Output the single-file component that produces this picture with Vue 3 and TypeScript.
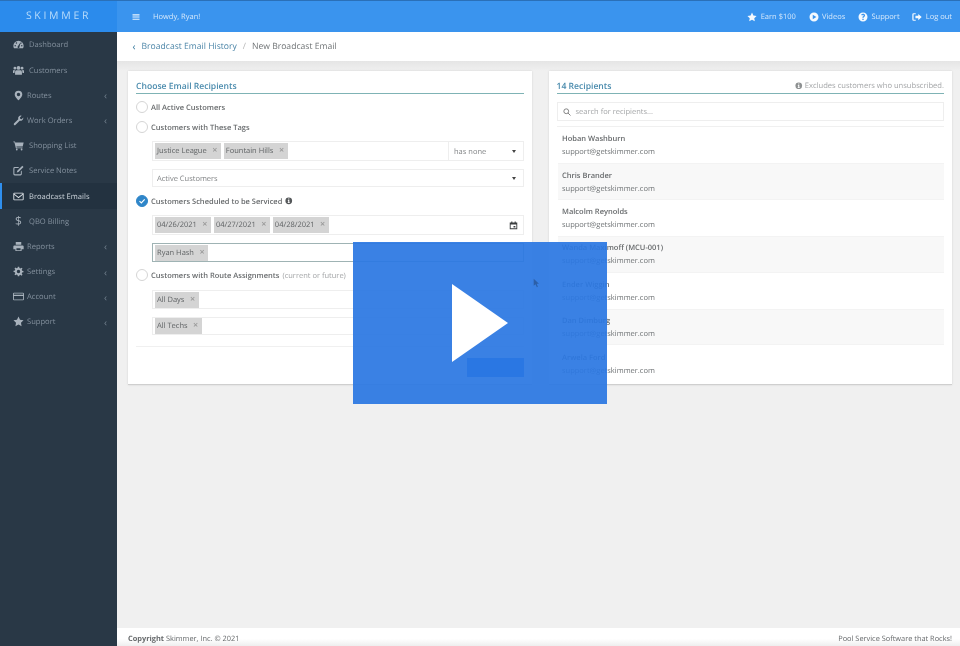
<script setup lang="ts">
const icons: Record<string, string> = {
  dashboard: 'M8 2.500A7.500 7.500 0 0 0 .5 10c0 1.400.4 2.600 1 3.500h13c.6-.9 1-2.100 1-3.500A7.500 7.500 0 0 0 8 2.500zM3.200 11a1.100 1.100 0 1 1 0-2.200 1.100 1.100 0 0 1 0 2.200zM5 7a1.100 1.100 0 1 1 0-2.200A1.100 1.100 0 0 1 5 7zm4.100 5.600a1.500 1.500 0 0 1-2.500-1.500L10.800 5l.5.200-1.800 5.600c.3.500 0 1.200-.4 1.800zM11.500 7a1.100 1.100 0 1 1 0-2.200 1.100 1.100 0 0 1 0 2.200zm1.300 4a1.100 1.100 0 1 1 0-2.200 1.100 1.100 0 0 1 0 2.200z',
  users: 'M8 1.500a2.700 2.700 0 1 1 0 5.400 2.700 2.700 0 0 1 0-5.400zM2.800 2.500a2.100 2.100 0 1 1 0 4.200 2.100 2.100 0 0 1 0-4.200zm10.400 0a2.100 2.100 0 1 1 0 4.200 2.100 2.100 0 0 1 0-4.200zM5.200 7.600h5.600c1.300 0 2.200 1.200 2.200 2.900V14H3v-3.500c0-1.700.9-2.900 2.200-2.900zM0 7.500h3.400c-.7.700-1.200 1.700-1.200 3v1H0zm12.600 0H16v4h-2.200v-1c0-1.300-.5-2.300-1.200-3z',
  pin: 'M8 1a5.500 5.500 0 0 0-5.500 5.500C2.500 10 8 15 8 15s5.500-5 5.500-8.500A5.500 5.500 0 0 0 8 1zm0 8a2.500 2.500 0 1 1 0-5 2.500 2.500 0 0 1 0 5z',
  wrench: 'M15 4.500a4 4 0 0 1-5.300 3.800L3.500 14.600a1.500 1.500 0 0 1-2.100-2.100l6.300-6.200A4 4 0 0 1 12.600 1L10 3.500l.5 2 2 .5L15 3.500z',
  cart: 'M.5 2h2.400l.4 1.500H15.500l-1.400 6H5l.3 1.300h8.700V12H4.200L2 3.200H.5zM5.500 12.500a1.300 1.300 0 1 1 0 2.600 1.300 1.300 0 0 1 0-2.600zm7 0a1.300 1.300 0 1 1 0 2.600 1.300 1.300 0 0 1 0-2.600z',
  edit: 'M2.500 3H9L7.600 4.400H2.700a.700.700 0 0 0-.7.700v7.800c0 .4.300.7.700.7h8c.4 0 .7-.3.700-.7V9.500l1.400-1.400v5c0 1.100-.9 2-2 2H2.500a2 2 0 0 1-2-2V5a2 2 0 0 1 2-2zM13.500 1l1.800 1.800L8 10.200 5.500 11l.7-2.600z',
  mail: 'M2 2.500h12A1.500 1.500 0 0 1 15.500 4v8a1.500 1.500 0 0 1-1.500 1.500H2A1.500 1.500 0 0 1 .5 12V4A1.500 1.500 0 0 1 2 2.500zm-.2 1.400L8 8.800l6.200-4.900-.2-.1H2zM1.800 5.600v6.400l.2.200h12l.2-.2V5.600L8 10.500z',
  print: 'M4 1.500h8v4H4zM2 6.500h12a1.500 1.500 0 0 1 1.500 1.500v4H12.500v2.500h-9V12H.5V8A1.500 1.500 0 0 1 2 6.500zm3 4v3h6v-3z',
  gear: 'M7 1h2l.4 2 1.300.5 1.700-1.100 1.400 1.400-1.100 1.700.5 1.300 2 .4v2l-2 .4-.5 1.300 1.100 1.700-1.400 1.400-1.700-1.100-1.300.5L9 15H7l-.4-2-1.300-.5-1.700 1.100-1.400-1.400 1.100-1.700-.5-1.300-2-.4V7l2-.4.5-1.300-1.100-1.700 1.400-1.400 1.700 1.100 1.300-.5zM8 5.500a2.500 2.500 0 1 0 0 5 2.500 2.500 0 0 0 0-5z',
  card: 'M1.500 2.500h13A1.500 1.500 0 0 1 16 4v8a1.500 1.500 0 0 1-1.500 1.500h-13A1.500 1.500 0 0 1 0 12V4a1.500 1.500 0 0 1 1.500-1.500zm-.2 1.300V5.500h13.400V3.800zm0 3.500v4.900h13.400V7.300z',
  star: 'M8 .8l2.200 4.700 5.100.7-3.700 3.600.9 5.100L8 12.500l-4.500 2.400.9-5.100L.7 6.200l5.100-.7z',
  bars: 'M1 2.500h14v2.300H1zM1 6.900h14v2.300H1zM1 11.300h14v2.300H1z',
  play: 'M8 .8a7.200 7.200 0 1 0 0 14.400A7.200 7.200 0 0 0 8 .8zM6 4.300L11.800 8 6 11.700z',
  help: 'M8 .8a7.200 7.200 0 1 0 0 14.400A7.200 7.200 0 0 0 8 .8zm1.100 12H6.900v-2h2.200zM9.200 9H6.900c0-2.200 2.300-2.300 2.300-3.500 0-.5-.5-.9-1.200-.9-.6 0-1.200.3-1.600.9L5 4.400c.6-1 1.700-1.600 3.100-1.600 1.800 0 3.200 1 3.200 2.600C11.300 7.400 9.200 7.500 9.200 9z',
  logout: 'M2.500 2H6v1.500H3a.500.500 0 0 0-.5.500v8c0 .3.200.5.500.5h3V14H2.500A2 2 0 0 1 .5 12V4a2 2 0 0 1 2-2zm7.500 1l5.500 5-5.500 5v-3H5.500V6H10z',
  info: 'M8 .8a7.200 7.200 0 1 0 0 14.400A7.200 7.200 0 0 0 8 .8zM6.800 3h2.400v2.200H6.800zM6 6.500h3.200V11H10.200v1.700H5.800V11h1.100V8.200H6z'
}

const navItems = [
  { label: 'Dashboard', icon: 'dashboard' },
  { label: 'Customers', icon: 'users' },
  { label: 'Routes', icon: 'pin', more: true },
  { label: 'Work Orders', icon: 'wrench', more: true },
  { label: 'Shopping List', icon: 'cart' },
  { label: 'Service Notes', icon: 'edit' },
  { label: 'Broadcast Emails', icon: 'mail', active: true },
  { label: 'QBO Billing', icon: '$' },
  { label: 'Reports', icon: 'print', more: true },
  { label: 'Settings', icon: 'gear', more: true },
  { label: 'Account', icon: 'card', more: true },
  { label: 'Support', icon: 'star', more: true }
]

const topLinks = [
  { label: 'Earn $100', icon: 'star' },
  { label: 'Videos', icon: 'play' },
  { label: 'Support', icon: 'help' },
  { label: 'Log out', icon: 'logout' }
]

const recipients = [
  'Hoban Washburn',
  'Chris Brander',
  'Malcolm Reynolds',
  'Wanda Maximoff (MCU-001)',
  'Ender Wiggin',
  'Dan Dimburg',
  'Arwela Ford'
]
</script>

<template>
  <div class="app">
    <aside class="sidebar">
      <div class="logo">SKIMMER</div>
      <nav>
        <a
          v-for="item in navItems"
          :key="item.label"
          class="nav-item"
          :class="{ active: item.active }"
        >
          <span v-if="item.icon === '$'" class="dollar">$</span>
          <svg v-else class="nav-icon" viewBox="0 0 16 16"><path :d="icons[item.icon]" fill-rule="evenodd" /></svg>
          <span class="nav-label" :class="{ tight: item.more }">{{ item.label }}</span>
          <span v-if="item.more" class="chev">‹</span>
        </a>
      </nav>
    </aside>

    <div class="main">
      <header class="topbar">
        <svg class="bars" viewBox="0 0 16 16"><path :d="icons.bars" /></svg>
        <span class="howdy">Howdy, Ryan!</span>
        <div class="top-links">
          <a v-for="link in topLinks" :key="link.label" class="top-link">
            <svg viewBox="0 0 16 16"><path :d="icons[link.icon]" fill-rule="evenodd" /></svg>
            {{ link.label }}
          </a>
        </div>
      </header>

      <div class="crumbs">
        <span class="back">‹</span>
        <a class="crumb-link">Broadcast Email History</a>
        <span class="slash">/</span>
        <span>New Broadcast Email</span>
      </div>

      <main class="content">
        <section class="panel">
          <h3 class="panel-title">Choose Email Recipients</h3>

          <label class="radio-row first"><i class="radio"></i>All Active Customers</label>
          <label class="radio-row"><i class="radio"></i>Customers with These Tags</label>
          <div class="field sub tags-field">
            <div class="tags">
              <span class="tag">Justice League <b>×</b></span>
              <span class="tag">Fountain Hills <b>×</b></span>
            </div>
            <div class="has-none">has none <i class="caret"></i></div>
          </div>
          <div class="field sub select-field">Active Customers <i class="caret"></i></div>

          <label class="radio-row checked">
            <i class="radio on">
              <svg viewBox="0 0 12 12"><path d="M3 6.200l2.200 2.200L9.200 4" /></svg>
            </i>
            Customers Scheduled to be Serviced
            <svg class="info dark" viewBox="0 0 16 16"><path :d="icons.info" fill-rule="evenodd" /></svg>
          </label>
          <div class="field sub date-field">
            <div class="tags">
              <span class="tag">04/26/2021 <b>×</b></span>
              <span class="tag">04/27/2021 <b>×</b></span>
              <span class="tag">04/28/2021 <b>×</b></span>
            </div>
            <svg class="cal" viewBox="0 0 12 12">
              <path d="M1 2h10v9H1zM2.200 4.600v5.200h7.600V4.600zM3 .8h1.500V2H3zM7.500.8H9V2H7.500zM6 6.500h2.500v2.300H6z" fill-rule="evenodd" />
            </svg>
          </div>
          <div class="field sub focus-field">
            <div class="tags"><span class="tag">Ryan Hash <b>×</b></span></div>
          </div>

          <label class="radio-row route">
            <i class="radio"></i>Customers with Route Assignments
            <em>(current or future)</em>
          </label>
          <div class="field sub days-field">
            <div class="tags"><span class="tag">All Days <b>×</b></span></div>
          </div>
          <div class="field sub techs-field">
            <div class="tags"><span class="tag">All Techs <b>×</b></span></div>
          </div>

          <div class="actions">
            <button class="send">Continue</button>
          </div>
        </section>

        <section class="panel right">
          <div class="panel-title split">
            <h3>14 Recipients</h3>
            <span class="note">
              <svg class="info" viewBox="0 0 16 16"><path :d="icons.info" fill-rule="evenodd" /></svg>
              Excludes customers who unsubscribed.
            </span>
          </div>
          <div class="search">
            <svg viewBox="0 0 16 16"><circle cx="6.500" cy="6.500" r="4.800" /><path d="M10 10l5 5" /></svg>
            search for recipients...
          </div>
          <ul class="recipients">
            <li v-for="name in recipients" :key="name">
              <strong>{{ name }}</strong>
              <span>support@getskimmer.com</span>
            </li>
          </ul>
        </section>
      </main>

      <footer class="footer">
        <span><strong>Copyright</strong> Skimmer, Inc. © 2021</span>
        <span>Pool Service Software that Rocks!</span>
      </footer>
    </div>

    <div class="video-overlay">
      <svg class="cursor" viewBox="0 0 10 14"><path d="M1 1l0 10 2.600-2.300L5.500 13l1.500-.7-1.800-4.200 3.300-.2z" /></svg>
      <i class="play"></i>
    </div>
  </div>
</template>

<style>
html,
body {
  margin: 0;
  background: #f0f0f0;
}
</style>

<style scoped>
* {
  box-sizing: border-box;
}

.app {
  position: relative;
  display: flex;
  width: 960px;
  height: 646px;
  overflow: hidden;
  font-family: 'Open Sans', 'Liberation Sans', sans-serif;
  font-size: 7.5px;
  text-rendering: geometricPrecision;
  color: #676a6c;
}

/* the reference is a soft video frame */
.sidebar,
.main {
  filter: blur(0.3px);
}

.sidebar {
  width: 117px;
  flex-shrink: 0;
  background: #293846;
}

.logo {
  height: 32px;
  background: #2b8bec;
  border-top: 1px solid #2a70b8;
  color: #b9dcfb;
  font-size: 10.5px;
  line-height: 31px;
  letter-spacing: 2.7px;
  text-align: center;
}

nav {
  padding-top: 0.3px;
}

.nav-item {
  display: flex;
  align-items: center;
  height: 25.2px;
  padding-left: 13px;
  padding-right: 10px;
  color: #83909d;
}

.nav-item.active {
  background: #233240;
  border-left: 2px solid #2f8fee;
  padding-left: 11px;
  color: #ccd4db;
}

.nav-icon {
  width: 11px;
  height: 11px;
  fill: #a8b2bc;
  flex-shrink: 0;
}

.active .nav-icon {
  fill: #e3e8ec;
}

.dollar {
  width: 11px;
  font-size: 12px;
  line-height: 10px;
  color: #a6b0ba;
  text-align: center;
}

.nav-label {
  margin-left: 5px;
  padding-top: 1px;
  font-size: 7.6px;
}

.nav-label.tight {
  margin-left: 3px;
}

.chev {
  margin-left: auto;
  font-size: 10px;
  line-height: 10px;
  color: #6f7d8a;
}

.main {
  flex: 1;
  display: flex;
  flex-direction: column;
  min-width: 0;
}

.topbar {
  display: flex;
  align-items: center;
  height: 32px;
  padding: 0 8px 0 15px;
  background: #3a94ee;
  border-top: 1px solid #2a70b8;
  color: #d7e9fb;
}

.bars {
  width: 8px;
  height: 8px;
  fill: #eaf4fd;
}

.howdy {
  margin-left: 13px;
}

.top-links {
  display: flex;
  gap: 12.900px;
  margin-left: auto;
}

.top-link {
  display: flex;
  align-items: center;
  gap: 3.300px;
}

.top-link svg {
  width: 10px;
  height: 10px;
  fill: #f4f9fe;
}

.crumbs {
  display: flex;
  align-items: center;
  height: 29px;
  padding: 0 0 1px 15.500px;
  background: #fff;
  font-size: 8.6px;
  color: #6f7375;
}

.back {
  margin-right: 6px;
  color: #3c7c9f;
  font-size: 10px;
}

.crumb-link {
  color: #4d86a8;
}

.slash {
  margin: 0 6px;
  color: #b5b5b5;
}

.content {
  flex: 1;
  display: grid;
  grid-template-columns: 404px 403px;
  align-items: start;
  gap: 17px;
  padding: 10px 8px 0 11px;
  background: linear-gradient(#e5e5e5, #f0f0f0 10px);
}

.panel {
  height: 314px;
  padding: 8px 8px 0;
  background: #fff;
  border-bottom: 1px solid #cfcfcf;
  box-shadow: 0 0 2px rgba(0, 0, 0, 0.12);
}

.panel.right {
  padding-left: 7.500px;
}

.panel-title,
.panel-title h3 {
  margin: 0;
  font-size: 8.6px;
  font-weight: 600;
  color: #4a8bad;
}

.panel-title {
  height: 15px;
  line-height: 14px;
  border-bottom: 1px solid #7fb3b5;
}

.split {
  display: flex;
  justify-content: space-between;
}

.note {
  display: flex;
  align-items: center;
  gap: 2px;
  height: 14px;
  font-size: 7.6px;
  font-weight: 400;
  color: #a3a5a7;
}

.radio-row {
  display: flex;
  align-items: center;
  gap: 3px;
  height: 20px;
  padding-top: 1px;
  font-weight: 600;
  color: #676a6c;
}

.radio-row.first {
  margin-top: 3px;
}

.radio-row.checked {
  margin-top: 4px;
}

.radio-row.route {
  margin-top: 3px;
}

.radio-row em {
  font-style: normal;
  font-weight: 400;
  color: #a3a5a7;
}

.radio {
  width: 12px;
  height: 12px;
  margin-top: -1px;
  flex-shrink: 0;
  border: 1px solid #d5d5d5;
  border-radius: 50%;
  background: #fff;
}

.radio.on {
  display: flex;
  background: #2f86c9;
  border-color: #2f86c9;
}

.radio.on svg {
  fill: none;
  stroke: #fff;
  stroke-width: 1.4;
}

.info {
  width: 7.500px;
  height: 7.500px;
  margin-top: -1px;
  fill: #8d9091;
  flex-shrink: 0;
}

.info.dark {
  fill: #55585a;
}

.field {
  display: flex;
  align-items: center;
  border: 1px solid #eeeeee;
  background: #fff;
}

.sub {
  margin-left: 16px;
}

.tags-field {
  height: 20px;
  margin-top: 4px;
}

.select-field,
.focus-field,
.days-field,
.techs-field {
  height: 19px;
  margin-top: 8px;
}

.select-field {
  height: 18px;
  justify-content: space-between;
  padding: 1px 7px 0 4px;
  color: #808385;
}

.date-field {
  height: 20px;
  margin-top: 4px;
  padding-right: 5px;
  justify-content: space-between;
}

.focus-field {
  border-color: #9fb3b4;
}

.days-field {
  margin-top: 5px;
}

.techs-field {
  height: 18px;
}

.tags {
  display: flex;
  gap: 3px;
  padding-left: 2px;
  flex: 1;
}

.tag {
  height: 16px;
  padding: 0 3.500px 0 2px;
  background: #d4d4d4;
  line-height: 17.500px;
  color: #5f6264;
}

.tag b {
  margin-left: 3.500px;
  font-size: 9px;
  line-height: 8px;
  font-weight: 600;
  color: #9a9a9a;
}

.has-none {
  display: flex;
  align-items: center;
  justify-content: space-between;
  align-self: stretch;
  width: 75px;
  padding: 1px 7px 0 5px;
  border-left: 1px solid #eeeeee;
  color: #808385;
}

.caret {
  width: 0;
  height: 0;
  margin-top: -1px;
  border-left: 2.500px solid transparent;
  border-right: 2.500px solid transparent;
  border-top: 3px solid #444;
}

.cal {
  width: 9px;
  height: 9px;
  fill: #3a3d3f;
}

.actions {
  display: flex;
  justify-content: flex-end;
  height: 38px;
  margin-top: 11px;
  padding-top: 11px;
  border-top: 1px solid #f0f0f0;
}

.send {
  width: 57px;
  height: 19px;
  padding: 0;
  border: 0;
  background: #1f77e6;
  color: #1f77e6;
  font: inherit;
}

.search {
  display: flex;
  align-items: center;
  gap: 5px;
  height: 19px;
  margin-top: 8px;
  padding-left: 5px;
  border: 1px solid #eeeeee;
  color: #a3a5a7;
}

.search svg {
  width: 8px;
  height: 8px;
  fill: none;
  stroke: #777;
  stroke-width: 1.800;
}

.recipients {
  margin: 5px 0 0;
  padding: 0;
  list-style: none;
  border-top: 1px solid #f0f0f0;
}

.recipients li {
  display: flex;
  flex-direction: column;
  justify-content: center;
  gap: 3px;
  height: 36.400px;
  padding: 1px 0 0 4.500px;
  margin-left: 1px;
}

.recipients li:nth-child(even) {
  background: #f8f8f8;
  border-top: 1px solid #f3f3f3;
  border-bottom: 1px solid #f3f3f3;
}

.recipients strong {
  font-weight: 600;
}

.recipients span {
  color: #6f7375;
}

.footer {
  display: flex;
  justify-content: space-between;
  align-items: center;
  height: 18px;
  padding: 3px 8px 0 11px;
  background: linear-gradient(#fff, #fff 60%, #eeeeee);
  color: #676a6c;
  font-size: 7.400px;
}

.footer strong {
  font-weight: 700;
}

/* video thumbnail sits on top of the whole page */
.video-overlay {
  position: absolute;
  left: 353px;
  top: 242px;
  display: flex;
  align-items: center;
  justify-content: center;
  width: 254px;
  height: 162px;
  background: rgba(43, 119, 226, 0.93);
}

.play {
  width: 0;
  height: 0;
  margin-left: -1px;
  border-left: 56px solid #fff;
  border-top: 39px solid transparent;
  border-bottom: 39px solid transparent;
}

.cursor {
  position: absolute;
  left: 180px;
  top: 36px;
  width: 7px;
  height: 10px;
  fill: #2c5fa8;
}
</style>
